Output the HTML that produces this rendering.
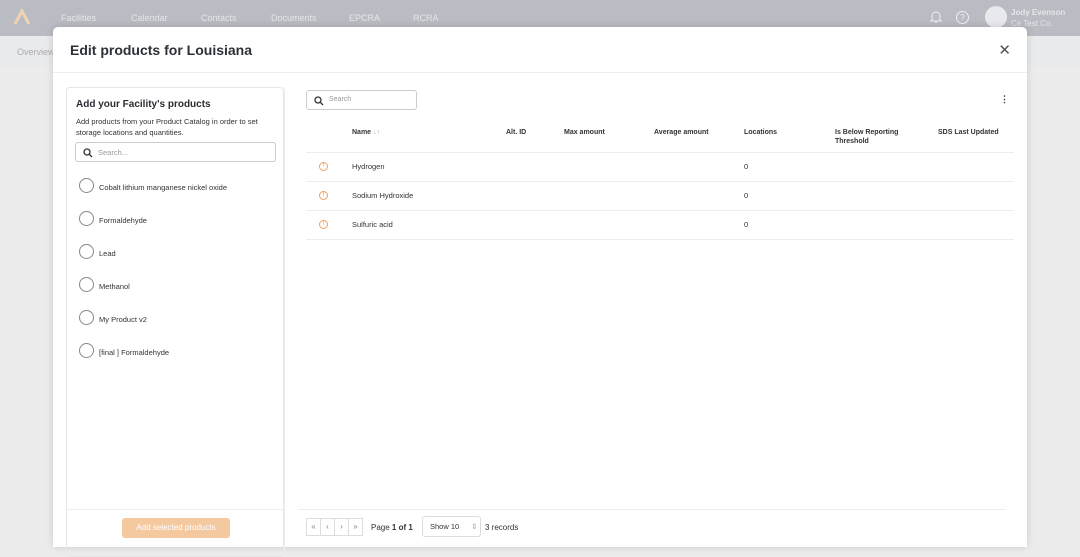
<!DOCTYPE html>
<html><head><meta charset="utf-8"><style>
*{box-sizing:border-box;margin:0;padding:0}
body{width:1080px;height:540px;overflow:hidden;font-family:"Liberation Sans",sans-serif;background:#ececed;position:relative;color:#2a2d33}
.nav{position:absolute;left:0;top:0;width:1080px;height:36px;background:#b9bcc2}
.nav span{position:absolute;top:13px;font-size:9px;color:#e4e6ea}
.sub{position:absolute;left:0;top:36px;width:1080px;height:30px;background:#e9eaec}
.modal{position:absolute;left:53px;top:27px;width:974px;height:520px;background:#fff;border-radius:5px 5px 0 0;box-shadow:0 0 8px rgba(0,0,0,.15)}
.title{position:absolute;left:17px;top:15px;font-size:14px;font-weight:bold;color:#2d3038}
.x{position:absolute;right:16px;top:14px;font-size:15px;color:#555}
.hl{position:absolute;left:0;top:45px;width:974px;border-top:1px solid #ececec}
.left{position:absolute;left:13px;top:60px;width:218px;height:470px;border:1px solid #e6e6e6;border-radius:4px}
.left h3{position:absolute;left:9px;top:11px;font-size:10px;font-weight:bold}
.left p{position:absolute;left:9px;top:28px;width:200px;font-size:7.5px;line-height:11px;color:#333}
.ls{position:absolute;left:8px;top:54px;width:201px;height:20px;border:1px solid #ccc;border-radius:3px;font-size:7.5px;color:#999;padding:5px 0 0 22px}
.item{position:absolute;left:12px;font-size:7.5px;color:#333}
.item i{position:absolute;left:0;top:-5px;width:15px;height:15px;border:1.5px solid #888;border-radius:50%}
.item b{font-weight:normal;margin-left:20px}
.foot{position:absolute;left:0;top:421px;width:216px;border-top:1px solid #eee}
.btn{position:absolute;left:55px;top:430px;width:108px;height:20px;background:#f5c9a0;border-radius:3px;color:#fff;font-size:8px;text-align:center;line-height:20px}
.rs{position:absolute;left:253px;top:63px;width:111px;height:20px;border:1px solid #ccc;border-radius:3px;font-size:7px;color:#999;padding:5px 0 0 22px}
.th{position:absolute;top:101px;font-size:7px;font-weight:bold;color:#333;line-height:9px}
.row{position:absolute;left:253px;width:708px;border-top:1px solid #ececec}
.td{position:absolute;font-size:7.5px;color:#333}
.ic{position:absolute;left:266px;width:9px;height:9px;border:1.3px solid #f0a060;border-radius:50%;font-size:5px;color:#f0a060;text-align:center;line-height:7px;font-weight:bold}
.pg{position:absolute;top:491px;height:18px;border:1px solid #ddd;font-size:8px;color:#888;text-align:center;line-height:16px}
</style></head><body>
<div class="nav">
<svg style="position:absolute;left:13px;top:9px" width="18" height="16"><path d="M2 15L9 2L16 15" stroke="#f2d2b5" stroke-width="3" fill="none"/></svg>
<span style="left:61px">Facilities</span><span style="left:131px">Calendar</span><span style="left:201px">Contacts</span><span style="left:271px">Documents</span><span style="left:349px">EPCRA</span><span style="left:413px">RCRA</span>
<svg style="position:absolute;left:929px;top:10px" width="14" height="14"><path d="M3 10V6a4 4 0 0 1 8 0v4l1 1H2z M6 12h2" stroke="#eef" fill="none"/></svg>
<div style="position:absolute;left:956px;top:11px;width:13px;height:13px;border:1px solid #eef;border-radius:50%;font-size:8px;color:#eef;text-align:center;line-height:11px">?</div>
<div style="position:absolute;left:985px;top:6px;width:22px;height:22px;border-radius:50%;background:#e8e9ec"></div>
<span style="left:1011px;top:8px;font-weight:bold;font-size:8px">Jody Evenson</span><span style="left:1011px;top:19px;font-size:8px">Ce Test Co.</span>
</div>
<div class="sub"><span style="position:absolute;left:17px;top:11px;font-size:9px;color:#aaa">Overview</span></div>
<div class="modal">
<div class="title">Edit products for Louisiana</div><div class="x">✕</div><div class="hl"></div>
<div class="left">
<h3>Add your Facility's products</h3>
<p>Add products from your Product Catalog in order to set storage locations and quantities.</p>
<div class="ls"><svg style="position:absolute;left:7px;top:5px" width="10" height="10"><circle cx="4" cy="4" r="3" stroke="#333" stroke-width="1.3" fill="none"/><path d="M6.5 6.5L9 9" stroke="#333" stroke-width="1.3"/></svg>Search...</div>
<div class="item" style="top:95px"><i></i><b>Cobalt lithium manganese nickel oxide</b></div>
<div class="item" style="top:128px"><i></i><b>Formaldehyde</b></div>
<div class="item" style="top:161px"><i></i><b>Lead</b></div>
<div class="item" style="top:194px"><i></i><b>Methanol</b></div>
<div class="item" style="top:227px"><i></i><b>My Product v2</b></div>
<div class="item" style="top:260px"><i></i><b>[final ] Formaldehyde</b></div>
<div class="foot"></div>
<div class="btn">Add selected products</div>
</div>
<div class="rs"><svg style="position:absolute;left:7px;top:5px" width="10" height="10"><circle cx="4" cy="4" r="3" stroke="#333" stroke-width="1.3" fill="none"/><path d="M6.5 6.5L9 9" stroke="#333" stroke-width="1.3"/></svg>Search</div>
<div style="position:absolute;left:947px;top:67px;font-size:9px;font-weight:bold">⋮</div>
<div class="th" style="left:299px">Name <span style="color:#aaa;font-weight:normal">↓↑</span></div>
<div class="th" style="left:453px">Alt. ID</div><div class="th" style="left:511px">Max amount</div><div class="th" style="left:601px">Average amount</div><div class="th" style="left:691px">Locations</div><div class="th" style="left:782px">Is Below Reporting<br>Threshold</div><div class="th" style="left:885px">SDS Last Updated</div>
<div class="row" style="top:125px"></div><div class="row" style="top:154px"></div><div class="row" style="top:183px"></div><div class="row" style="top:212px"></div>
<div class="ic" style="top:135px">!</div><div class="td" style="left:299px;top:135px">Hydrogen</div><div class="td" style="left:691px;top:135px">0</div>
<div class="ic" style="top:164px">!</div><div class="td" style="left:299px;top:164px">Sodium Hydroxide</div><div class="td" style="left:691px;top:164px">0</div>
<div class="ic" style="top:193px">!</div><div class="td" style="left:299px;top:193px">Sulfuric acid</div><div class="td" style="left:691px;top:193px">0</div>
<div style="position:absolute;left:231px;top:60px;height:470px;border-left:1px solid #eee"></div>
<div class="row" style="top:482px;left:245px"></div>
<div class="pg" style="left:253px;width:15px">«</div><div class="pg" style="left:267px;width:15px">‹</div><div class="pg" style="left:281px;width:15px">›</div><div class="pg" style="left:295px;width:15px">»</div>
<div class="td" style="left:318px;top:496px;font-size:8px">Page <b>1 of 1</b></div>
<div class="pg" style="left:369px;width:59px;height:21px;top:489px;border-radius:3px;color:#333;font-size:7.5px;text-align:left;padding-left:7px;line-height:19px">Show 10 <span style="color:#aaa;margin-left:10px">⇕</span></div>
<div class="td" style="left:432px;top:496px;font-size:8px">3 records</div>
</div>
</body></html>
